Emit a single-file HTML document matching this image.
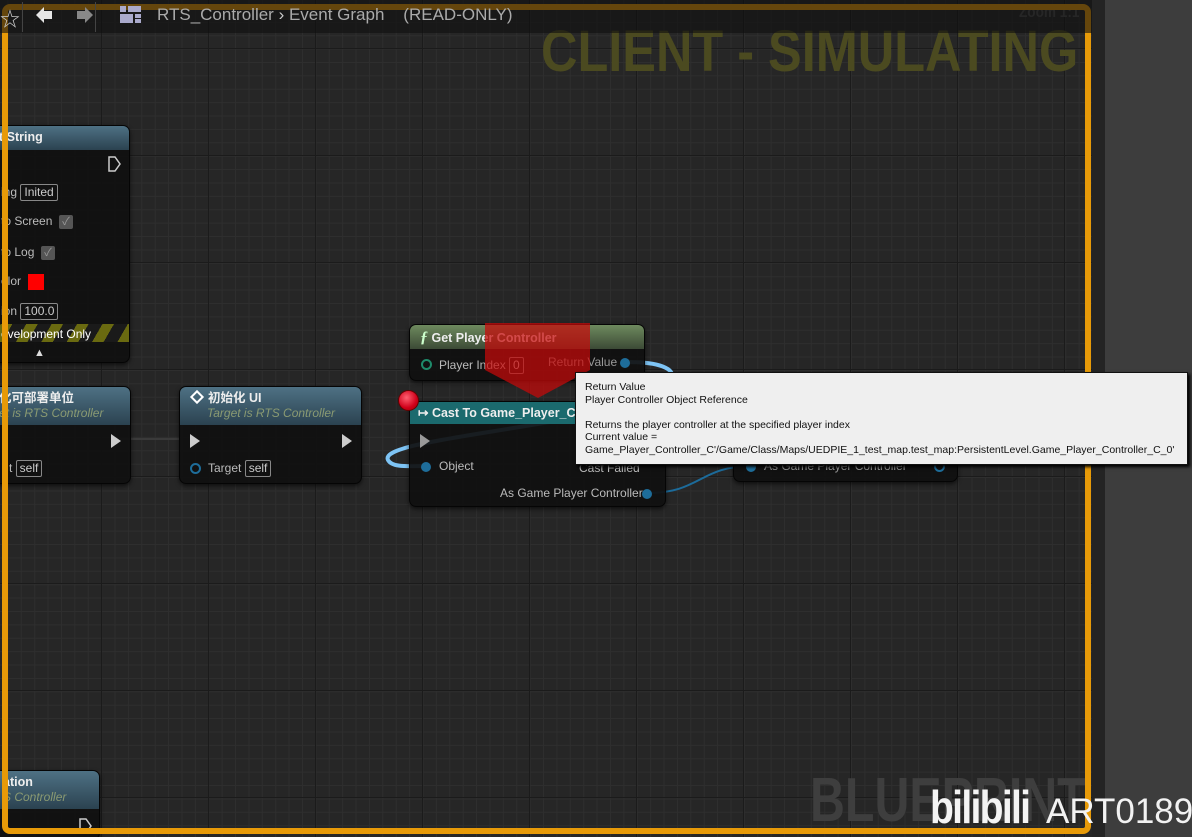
<!DOCTYPE html>
<html><head><meta charset="utf-8">
<style>
*{margin:0;padding:0;box-sizing:border-box}
body{width:1192px;height:837px;overflow:hidden;background:#262626;font-family:"Liberation Sans","Noto Sans CJK SC",sans-serif;position:relative}
#graph{position:absolute;left:0;top:0;width:1092px;height:837px;overflow:hidden;
background-color:#262626;
background-image:
linear-gradient(#1b1b1b 1px,transparent 1px),
linear-gradient(90deg,#1b1b1b 1px,transparent 1px),
linear-gradient(#2e2e2e 1px,transparent 1px),
linear-gradient(90deg,#2e2e2e 1px,transparent 1px);
background-size:107px 107px,107px 107px,13.4px 13.4px,13.4px 13.4px;
background-position:0 48px,-6px 0,0 -5px,-6px 0;}
#rp{position:absolute;left:1092px;top:0;width:100px;height:837px;background:#3d3d3d;border-left:13px solid #242424}
#bar{position:absolute;left:0;top:0;width:1092px;height:33px;background:rgba(15,15,15,.6);color:#aaa;font-size:17px;z-index:5}
.node{position:absolute;background:rgba(16,16,16,.93);border-radius:7px;border:1px solid #050505;box-shadow:0 2px 4px rgba(0,0,0,.6);color:#bbb;font-size:12px}
.hd{border-radius:6px 6px 0 0;color:#eee;font-weight:bold;font-size:12.5px;padding:4px 10px}
.blue{background:linear-gradient(#4e7184,#2b4250)}
.sub{font-style:italic;color:#8a9a72;font-weight:normal;font-size:12px}
.box{display:inline-block;border:1px solid #888;border-radius:2px;padding:0 3px;font-size:12px;color:#ccc;line-height:15px}
.exec{position:absolute;width:0;height:0;border-top:7px solid transparent;border-bottom:7px solid transparent;border-left:10px solid #ccc}
.pin{position:absolute;width:10px;height:10px;border-radius:50%;background:#1e6d9a}
.t{position:absolute;white-space:nowrap}
.chk{display:inline-block;width:14px;height:14px;background:#555;border-radius:2px;vertical-align:middle;color:#999;font-size:11px;line-height:14px;text-align:center}
#frame{position:absolute;left:2px;top:4px;width:1089px;height:830px;border:6px solid #e79a08;border-radius:8px;pointer-events:none;z-index:4}
</style></head><body>
<div id="graph">
<div class="t" style="left:541px;top:18px;font-size:58px;font-weight:bold;color:#4b4a20;transform:scaleX(0.87);transform-origin:0 0">CLIENT - SIMULATING</div>
<div class="t" style="left:1019px;top:4px;font-size:16px;color:#4a4a4a;font-weight:bold;transform:scaleX(0.85);transform-origin:0 0">Zoom 1:1</div>
<div class="t" style="left:810px;top:765px;font-size:62px;font-weight:bold;color:#3e3e3e;transform:scaleX(0.78);transform-origin:0 0">BLUEPRINT</div>

<svg style="position:absolute;left:0;top:0" width="1092" height="837">
<path d="M120 439 L180 439" stroke="#3a3a3a" stroke-width="2" fill="none"/>
<path d="M626 362 C700 362,690 395,560 420 C480 435,380 445,388 460 C392 468,410 466,425 466" stroke="#7ec4f5" stroke-width="4" fill="none"/>
<path d="M648 493 C700 493,700 466,752 466" stroke="#1c6b9a" stroke-width="2" fill="none"/>
</svg>

<div class="node" style="left:-40px;top:125px;width:170px;height:238px">
<div class="hd blue" style="height:24px;padding-left:38px">t String</div>
<svg style="position:absolute;left:147px;top:30px" width="14" height="16"><path d="M1 1 H7 L12 8 L7 15 H1 Z" stroke="#ccc" stroke-width="1.5" fill="none"/></svg>
<div class="t" style="left:40px;top:58px">ing <span class="box">Inited</span></div>
<div class="t" style="left:40px;top:88px">to Screen &nbsp;<span class="chk">✓</span></div>
<div class="t" style="left:40px;top:119px">to Log &nbsp;<span class="chk">✓</span></div>
<div class="t" style="left:40px;top:148px">olor <span style="display:inline-block;width:16px;height:16px;background:#f00;vertical-align:middle;margin-left:4px"></span></div>
<div class="t" style="left:40px;top:177px">ion <span class="box">100.0</span></div>
<div style="position:absolute;left:0;top:198px;width:168px;height:18px;background:repeating-linear-gradient(-60deg,#6a6a10 0 10px,#1a1a1a 10px 22px)"></div>
<div class="t" style="left:40px;top:201px;color:#fff">evelopment Only</div>
<div class="t" style="left:73px;top:221px;font-size:11px;color:#ddd">▲</div>
</div>

<div class="node" style="left:-80px;top:386px;width:211px;height:98px">
<div class="hd blue" style="height:38px;padding-left:78px;line-height:15px">化可部署单位<br><span class="sub">et is RTS Controller</span></div>
<div class="exec" style="left:190px;top:47px"></div>
<div class="t" style="left:88px;top:73px">t <span class="box">self</span></div>
</div>

<div class="node" style="left:179px;top:386px;width:183px;height:98px">
<div class="hd blue" style="height:38px;line-height:15px"><span style="display:inline-block;width:10px;height:10px;border:2px solid #fff;transform:rotate(45deg);margin:0 6px 0 2px"></span>初始化 UI<br><span class="sub" style="padding-left:17px">Target is RTS Controller</span></div>
<div class="exec" style="left:10px;top:47px"></div>
<div class="exec" style="left:162px;top:47px"></div>
<div style="position:absolute;left:10px;top:76px;width:11px;height:11px;border:2px solid #1e6d9a;border-radius:50%"></div>
<div class="t" style="left:28px;top:73px">Target <span class="box">self</span></div>
</div>

<div class="node" style="left:409px;top:324px;width:236px;height:57px">
<div class="hd" style="background:linear-gradient(#6e8a5e,#3c4a36);height:24px"><i style="font-family:'Liberation Serif',serif;font-size:16px;color:#cfc">ƒ</i> Get Player Controller</div>
<div style="position:absolute;left:11px;top:34px;width:11px;height:11px;border:2px solid #1e8a6a;border-radius:50%"></div>
<div class="t" style="left:29px;top:32px">Player Index <span class="box">0</span></div>
<div class="t" style="left:138px;top:30px;color:#999">Return Value</div>
<div class="pin" style="left:210px;top:33px"></div>
</div>

<div class="node" style="left:733px;top:440px;width:225px;height:42px">
<div class="pin" style="left:12px;top:21px"></div>
<div class="t" style="left:30px;top:18px;color:#999">As Game Player Controller</div>
<div style="position:absolute;left:200px;top:20px;width:11px;height:11px;border:2px solid #1e6d9a;border-radius:50%"></div>
</div>

<div class="node" style="left:409px;top:401px;width:257px;height:106px">
<div class="hd" style="background:#1b6a6e;height:22px;padding:3px 8px">↦ Cast To Game_Player_Controller</div>
<div class="exec" style="left:10px;top:32px;border-left-color:#999"></div>
<div class="pin" style="left:11px;top:60px"></div>
<div class="t" style="left:29px;top:57px">Object</div>
<div class="t" style="left:169px;top:59px">Cast Failed</div>
<div class="t" style="left:90px;top:84px">As Game Player Controller</div>
<div class="pin" style="left:232px;top:87px"></div>
</div>
<div style="position:absolute;left:398px;top:390px;width:21px;height:21px;border-radius:50%;background:radial-gradient(circle at 40% 35%,#ff6070,#d0001a 60%,#900);border:1px solid #600"></div>

<svg style="position:absolute;left:484px;top:322px" width="108" height="78"><path d="M1 1 H106 V48 L54 76 L1 48 Z" fill="rgba(200,10,10,.72)"/></svg>

<div class="node" style="left:-60px;top:770px;width:160px;height:70px">
<div class="hd blue" style="height:38px;line-height:15px;padding-left:62px">ation<br><span class="sub">S Controller</span></div>
<svg style="position:absolute;left:138px;top:47px" width="14" height="16"><path d="M1 1 H7 L12 8 L7 15 H1 Z" stroke="#ccc" stroke-width="1.5" fill="none"/></svg>
</div>
</div>

<div id="frame"></div>

<div id="bar">
<div class="t" style="left:0;top:3px;font-size:20px;color:#ccc">☆</div>
<div style="position:absolute;left:22px;top:2px;width:1px;height:30px;background:#444"></div>
<svg style="position:absolute;left:34px;top:5px" width="20" height="20"><path d="M2 10 L10 2 V6 H18 V14 H10 V18 Z" fill="#e6e6e6"/></svg>
<svg style="position:absolute;left:75px;top:5px" width="20" height="20"><path d="M18 10 L10 2 V6 H2 V14 H10 V18 Z" fill="#888"/></svg>
<div style="position:absolute;left:95px;top:2px;width:1px;height:30px;background:#444"></div>
<svg style="position:absolute;left:120px;top:6px" width="22" height="18"><rect x="0" y="0" width="6" height="6" fill="#aac"/><rect x="8" y="0" width="13" height="6" fill="#aac"/><rect x="0" y="8" width="13" height="9" fill="#aac"/><rect x="15" y="8" width="6" height="4" fill="#aac"/><rect x="15" y="13" width="6" height="4" fill="#aac"/></svg>
<div class="t" style="left:157px;top:5px;line-height:20px">RTS_Controller <span style="color:#ccc">›</span> Event Graph &nbsp;&nbsp; (READ-ONLY)</div>
</div>

<div id="rp"></div>

<div style="position:absolute;left:575px;top:372px;width:613px;height:93px;background:#efefef;border:1px solid #111;box-shadow:2px 2px 3px #000;color:#111;font-size:10.5px;line-height:12.6px;padding:8px 9px;white-space:nowrap;z-index:6">
Return Value<br>Player Controller Object Reference<br><br>Returns the player controller at the specified player index<br>Current value =<br>Game_Player_Controller_C'/Game/Class/Maps/UEDPIE_1_test_map.test_map:PersistentLevel.Game_Player_Controller_C_0'
</div>

<div class="t" style="left:930px;top:780px;font-size:46px;font-weight:bold;color:#f4f4f4;letter-spacing:-2px;transform:scaleX(0.85);transform-origin:0 0;z-index:7">bilibili</div>
<div class="t" style="left:1046px;top:792px;font-size:35px;color:#f2f2f2;z-index:7">ART0189</div>
</body></html>
